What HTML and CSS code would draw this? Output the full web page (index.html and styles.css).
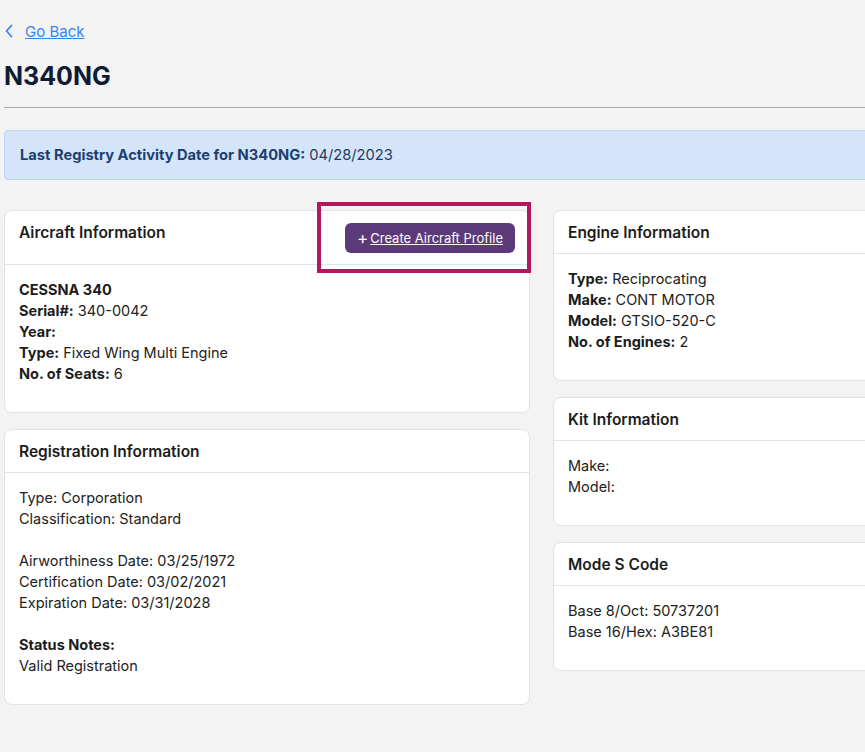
FILE: index.html
```html
<!DOCTYPE html>
<html lang="en">
<head>
    <meta charset="UTF-8">
    <meta name="viewport" content="width=device-width, initial-scale=1.0">
    <title>N340NG</title>
    <link rel="stylesheet" href="styles.css">
</head>
<body>

<div class="page">
    <a href="#" class="back-link">
        <svg class="back-icon" width="10" height="14" viewBox="0 0 10 14">
            <path d="M7.5 1.5 L2.5 7 L7.5 12.5" fill="none" stroke="currentColor" stroke-width="1.8" stroke-linecap="round" stroke-linejoin="round"/>
        </svg>
        <span>Go Back</span>
    </a>

    <h1>N340NG</h1>
    <hr class="divider">

    <div class="alert">
        <strong>Last Registry Activity Date for N340NG:</strong> 04/28/2023
    </div>

    <div class="columns">
        <div class="column">
            <div class="card">
                <div class="card-header">
                    <h2>Aircraft Information</h2>
                    <span class="highlight">
                        <a href="#" class="btn-create"><span class="plus">+</span><span class="btn-label">Create Aircraft Profile</span></a>
                    </span>
                </div>
                <div class="card-body">
                    <p><strong>CESSNA 340</strong></p>
                    <p><strong>Serial#:</strong> 340-0042</p>
                    <p><strong>Year:</strong></p>
                    <p><strong>Type:</strong> Fixed Wing Multi Engine</p>
                    <p><strong>No. of Seats:</strong> 6</p>
                </div>
            </div>

            <div class="card">
                <div class="card-header">
                    <h2>Registration Information</h2>
                </div>
                <div class="card-body">
                    <p>Type: Corporation</p>
                    <p>Classification: Standard</p>
                    <div class="group">
                        <p>Airworthiness Date: 03/25/1972</p>
                        <p>Certification Date: 03/02/2021</p>
                        <p>Expiration Date: 03/31/2028</p>
                    </div>
                    <div class="group">
                        <p><strong>Status Notes:</strong></p>
                        <p>Valid Registration</p>
                    </div>
                </div>
            </div>
        </div>

        <div class="column">
            <div class="card">
                <div class="card-header">
                    <h2>Engine Information</h2>
                </div>
                <div class="card-body">
                    <p><strong>Type:</strong> Reciprocating</p>
                    <p><strong>Make:</strong> CONT MOTOR</p>
                    <p><strong>Model:</strong> GTSIO-520-C</p>
                    <p><strong>No. of Engines:</strong> 2</p>
                </div>
            </div>

            <div class="card">
                <div class="card-header">
                    <h2>Kit Information</h2>
                </div>
                <div class="card-body">
                    <p>Make:</p>
                    <p>Model:</p>
                </div>
            </div>

            <div class="card">
                <div class="card-header">
                    <h2>Mode S Code</h2>
                </div>
                <div class="card-body">
                    <p>Base 8/Oct: 50737201</p>
                    <p>Base 16/Hex: A3BE81</p>
                </div>
            </div>
        </div>
    </div>
</div>

</body>
</html>
```

FILE: styles.css
```css
* {
    box-sizing: border-box;
    margin: 0;
    padding: 0;
}

html, body {
    overflow-x: hidden;
}

body {
    background-color: #f3f3f3;
    font-family: Inter, "Noto Sans", sans-serif;
    color: #222;
    font-size: 14.5px;
}

.page {
    width: 1100px;
    padding: 20px 0 40px 4px;
}

.back-link {
    display: inline-flex;
    align-items: center;
    gap: 11px;
    height: 22px;
    color: #3b82f6;
    font-size: 15px;
    text-decoration: none;
}

.back-link span {
    text-decoration: underline;
}

.back-icon {
    display: block;
}

h1 {
    margin-top: 18px;
    font-size: 25px;
    line-height: 32px;
    font-weight: 700;
    color: #0f1b33;
}

.divider {
    border: none;
    border-top: 1px solid #a5abb5;
    margin: 15px 0 22px;
}

.alert {
    height: 50px;
    display: flex;
    align-items: center;
    gap: 4px;
    padding: 0 15px;
    background-color: #d5e5f9;
    border: 1px solid #bad5f5;
    border-radius: 4px;
    color: #1e3a5f;
    font-size: 14.7px;
}

.alert strong {
    color: #1d3f72;
}

.columns {
    margin-top: 30px;
    display: grid;
    grid-template-columns: 526px 1fr;
    gap: 23px;
    align-items: start;
}

.column {
    display: flex;
    flex-direction: column;
    gap: 16px;
}

.card {
    background: white;
    border: 1px solid #e1e3e7;
    border-radius: 8px;
}

.card-header {
    display: flex;
    justify-content: space-between;
    align-items: flex-start;
    padding: 12px 14px 11px;
    border-bottom: 1px solid #e1e3e7;
}

.card-header h2 {
    font-size: 15.5px;
    line-height: 19px;
    font-weight: 600;
    color: #1c1c1c;
}

.card-body {
    padding: 14px 14px 28px;
}

.card-body p {
    line-height: 21px;
}

.card-body strong {
    font-weight: 700;
    color: #1c1c1c;
}

.group {
    margin-top: 21px;
}

.highlight {
    position: relative;
    display: block;
}

.highlight::after {
    content: "";
    position: absolute;
    top: -21px;
    bottom: -20px;
    left: -28px;
    right: -16px;
    border: 4px solid #b3175e;
    pointer-events: none;
}

.btn-create {
    display: flex;
    align-items: center;
    height: 30px;
    padding: 0 12px;
    background-color: #5c3a7a;
    border-radius: 6px;
    color: white;
    font-size: 13px;
    text-decoration: none;
}

.plus {
    font-size: 17px;
    margin-right: 2px;
}

.btn-label {
    text-decoration: underline;
}
```
